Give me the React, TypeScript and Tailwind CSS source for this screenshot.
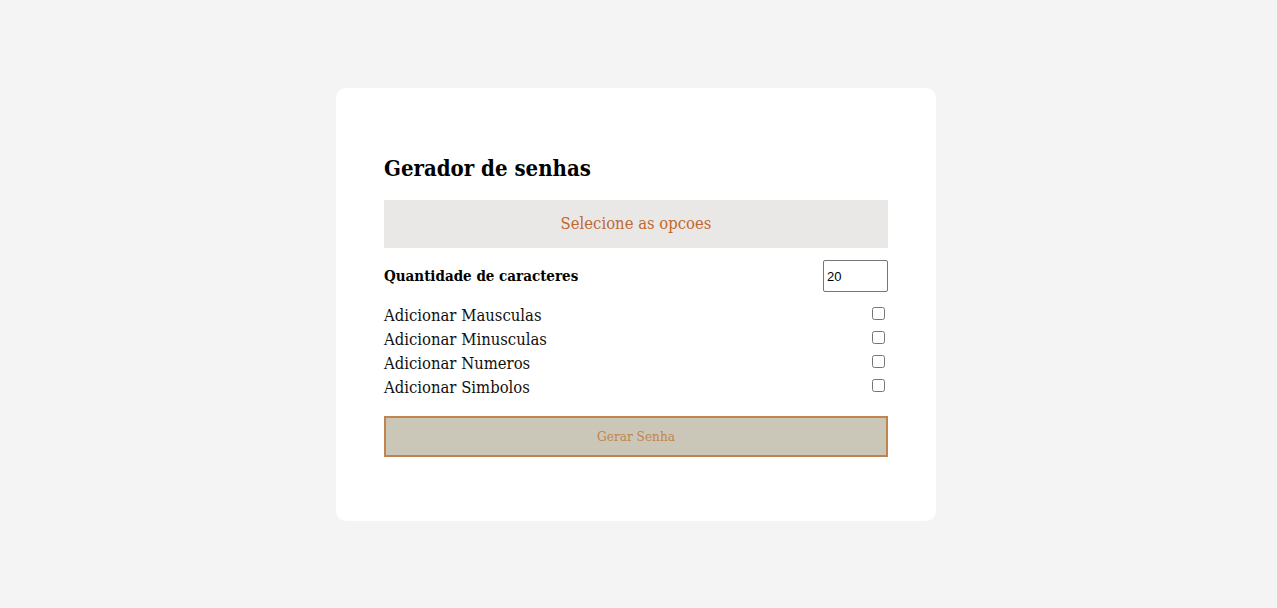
import React from "react";

const options = ["Adicionar Mausculas", "Adicionar Minusculas", "Adicionar Numeros", "Adicionar Simbolos"];

const App: React.FC = () => {
  return (
    <div className="min-h-screen bg-[#f4f4f4] flex justify-center pt-[88px] pr-[5px] font-['DejaVu_Serif_Condensed','DejaVu_Serif',serif]">
      <div className="w-[600px] h-[433px] bg-white rounded-[10px] px-12 pt-[64px]">
        <h1 className="text-[22px] leading-[32px] font-bold text-black">Gerador de senhas</h1>

        <div className="mt-[16px] h-12 bg-[#e9e8e6] flex items-center justify-center text-[16.5px] text-[#c0692f]">
          Selecione as opcoes
        </div>

        <div className="mt-3 flex items-center justify-between h-8">
          <span className="text-[15px] font-bold text-black">Quantidade de caracteres</span>
          <input
            type="number"
            defaultValue={20}
            className="w-[65px] h-8 border border-[#767676] rounded-[2px] px-[3px] text-[13px] font-['Liberation_Sans',sans-serif]"
          />
        </div>

        <div className="mt-3 flex flex-col">
          {options.map((o) => (
            <label key={o} className="flex items-start justify-between h-6 leading-6 text-[16.5px] text-[#111]">
              <span>{o}</span>
              <input type="checkbox" className="w-[13px] h-[13px] mt-[3px] mr-[3px]" />
            </label>
          ))}
        </div>

        <button className="mt-4 w-full h-[41px] bg-[#cbc7b8] border-2 border-[#c0844e] text-[13.5px] text-[#c0844e]">
          Gerar Senha
        </button>
      </div>
    </div>
  );
};

export default App;
